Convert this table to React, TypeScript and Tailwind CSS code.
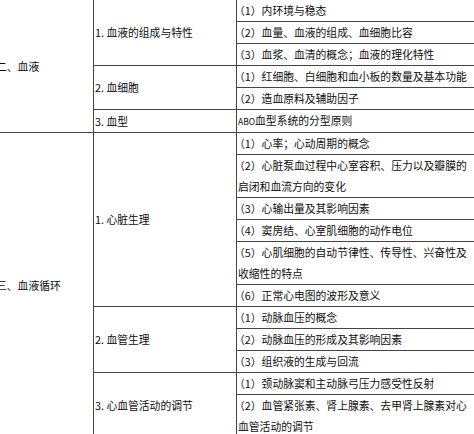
const sections = [
  {
    title: "二、血液",
    groups: [
      {
        name: "1. 血液的组成与特性",
        items: ["（1）内环境与稳态", "（2）血量、血液的组成、血细胞比容", "（3）血浆、血清的概念；血液的理化特性"],
      },
      {
        name: "2. 血细胞",
        items: ["（1）红细胞、白细胞和血小板的数量及基本功能", "（2）造血原料及辅助因子"],
      },
      {
        name: "3. 血型",
        items: ["ABO"],
      },
    ],
  },
  {
    title: "三、血液循环",
    groups: [
      {
        name: "1. 心脏生理",
        items: [
          "（1）心率；心动周期的概念",
          "（2）心脏泵血过程中心室容积、压力以及瓣膜的启闭和血流方向的变化",
          "（3）心输出量及其影响因素",
          "（4）窦房结、心室肌细胞的动作电位",
          "（5）心肌细胞的自动节律性、传导性、兴奋性及收缩性的特点",
          "（6）正常心电图的波形及意义",
        ],
      },
      {
        name: "2. 血管生理",
        items: ["（1）动脉血压的概念", "（2）动脉血压的形成及其影响因素", "（3）组织液的生成与回流"],
      },
      {
        name: "3. 心血管活动的调节",
        items: ["（1）颈动脉窦和主动脉弓压力感受性反射", "（2）血管紧张素、肾上腺素、去甲肾上腺素对心血管活动的调节"],
      },
    ],
  },
];

export default function App() {
  return (
    <div
      className="w-[474px] h-[434px] overflow-hidden bg-white text-[#0e0e0e] text-[10.8px] leading-[21px]"
      style={{ fontFamily: '"Noto Sans CJK SC", "Liberation Sans", sans-serif' }}
    >
      <div className="-ml-[4px] -mt-[1px] w-[520px] border-t border-[#444]">
        {sections.map((section) => (
          <div key={section.title} className="flex border-b border-[#444]">
            {/* 左侧章节 */}
            <div className="w-[98px] shrink-0 flex items-center border-r border-[#444]">
              {section.title}
            </div>

            <div className="flex-1 flex flex-col">
              {section.groups.map((group, gi) => (
                <div
                  key={group.name}
                  className={`flex ${gi < section.groups.length - 1 ? "border-b border-[#444]" : ""}`}
                >
                  <div className="w-[143px] shrink-0 flex items-center pl-[1px] border-r border-[#444]">
                    {group.name}
                  </div>
                  <div className="w-[240px] shrink-0 flex flex-col">
                    {group.items.map((item, ii) => (
                      <div
                        key={item}
                        className={`px-[1px] ${item === "ABO" ? "" : "-indent-[4px]"} ${
                          ii < group.items.length - 1 ? "border-b border-[#444]" : ""
                        }`}
                      >
                        {item === "ABO" ? (
                          <>
                            <span className="text-[8.5px]">ABO</span>血型系统的分型原则
                          </>
                        ) : (
                          item
                        )}
                      </div>
                    ))}
                  </div>
                </div>
              ))}
            </div>
          </div>
        ))}
      </div>
    </div>
  );
}
